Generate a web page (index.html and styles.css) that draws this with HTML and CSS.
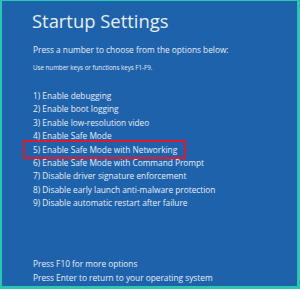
FILE: index.html
```html
<!DOCTYPE html>
<html>
<head>
<meta charset="utf-8">
<link rel="stylesheet" href="styles.css">
</head>
<body>
<div class="screen">
  <h1 class="title">Startup Settings</h1>
  <p class="lead">Press a number to choose from the options below:</p>
  <p class="hint">Use number keys or functions keys F1-F9.</p>
  <ul class="options">
    <li>1) Enable debugging</li>
    <li>2) Enable boot logging</li>
    <li>3) Enable low-resolution video</li>
    <li>4) Enable Safe Mode</li>
    <li class="selected">5) Enable Safe Mode with Networking</li>
    <li>6) Enable Safe Mode with Command Prompt</li>
    <li>7) Disable driver signature enforcement</li>
    <li>8) Disable early launch anti-malware protection</li>
    <li>9) Disable automatic restart after failure</li>
  </ul>
  <div class="footer">
    <p>Press F10 for more options</p>
    <p>Press Enter to return to your operating system</p>
  </div>
</div>
</body>
</html>
```
FILE: styles.css
```css
html, body {
  margin: 0;
  padding: 0;
  background: #2bc6b2;
}
.screen {
  box-sizing: border-box;
  width: 300px;
  height: 289px;
  background: #1e62ab;
  border-style: solid;
  border-color: #2bc6b2;
  border-width: 1px 3px 3px 2px;
  color: #e8eef6;
  font-family: "Open Sans", "Noto Sans", sans-serif;
  padding: 8px 0 0 30px;
  display: flex;
  flex-direction: column;
}
.title {
  margin: 0;
  font-weight: 400;
  font-size: 18.4px;
  line-height: 24px;
}
.lead {
  margin: 11px 0 0 1px;
  font-size: 8.3px;
  line-height: 12px;
}
.hint {
  margin: 7px 0 0 1px;
  font-size: 6.2px;
  line-height: 10px;
}
.options {
  list-style: none;
  margin: 16px 0 0 1px;
  padding: 0;
  font-size: 8.3px;
  line-height: 13.4px;
}
.options li {
  white-space: nowrap;
}
.selected {
  position: relative;
}
.selected::before {
  content: "";
  position: absolute;
  left: -10px;
  top: -3px;
  width: 159px;
  height: 15px;
  border: 2px solid #e3192b;
}
.footer {
  margin: auto 0 1px 1px;
  font-size: 8.3px;
  line-height: 14px;
}
.footer p {
  margin: 0;
}
```
